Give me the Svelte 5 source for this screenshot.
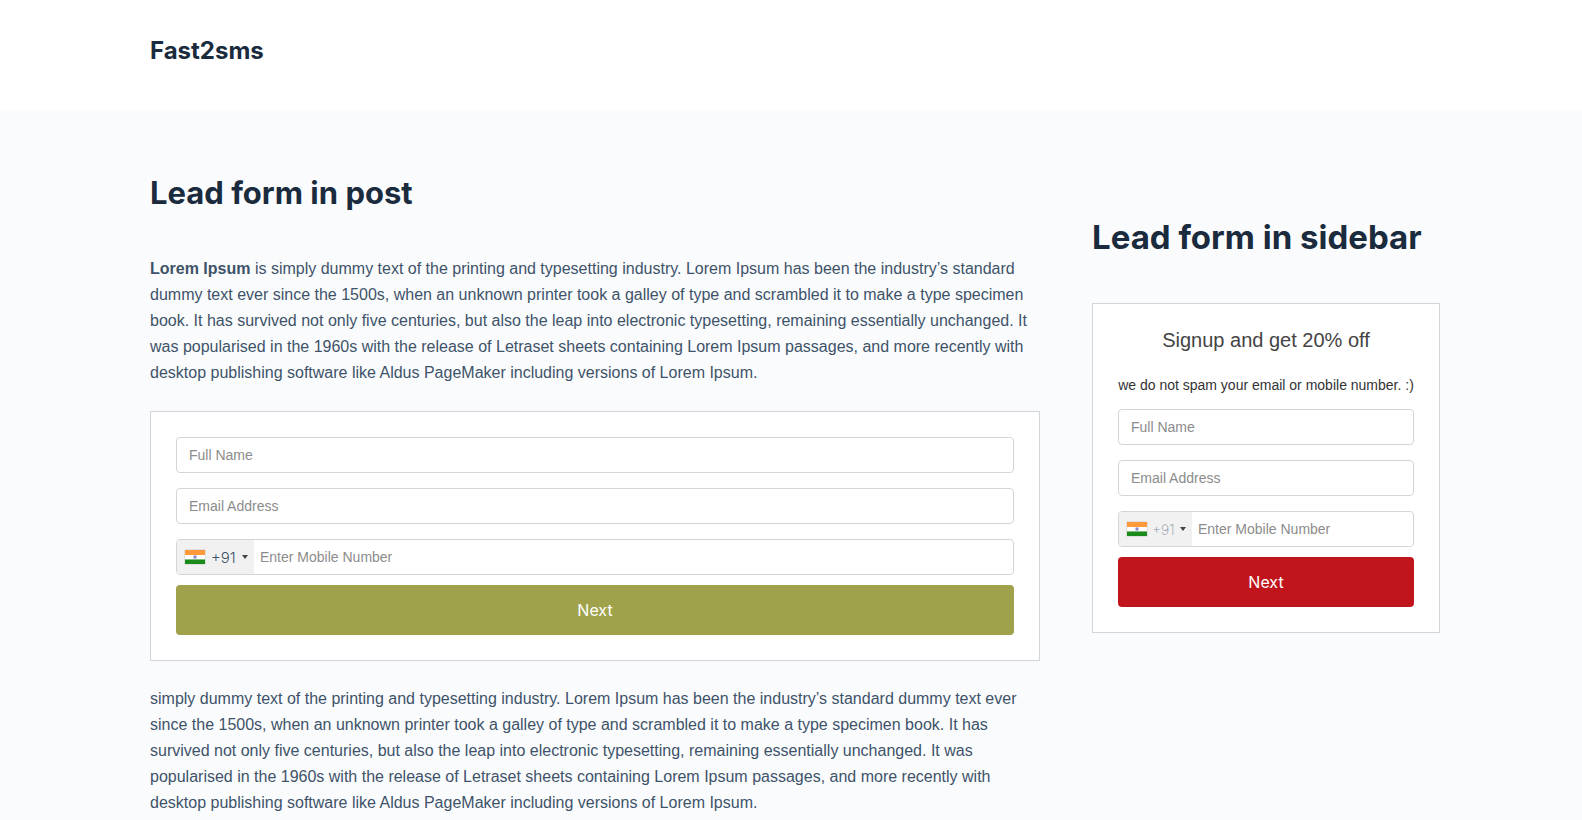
<script>
    let post = { name: '', email: '', code: '+91', mobile: '' };
    let sidebar = { name: '', email: '', code: '+91', mobile: '' };

    const codes = ['+91'];

    function submitLead(lead) {
        console.log('Lead submitted:', lead);
    }
</script>

<!-- Indian flag shown next to the dial code -->
{#snippet flag()}
    <svg class="flag" viewBox="0 0 20 14" width="20" height="14" aria-hidden="true">
        <rect width="20" height="14" fill="#ffffff" />
        <rect width="20" height="5" fill="#ff9a3c" />
        <rect y="9" width="20" height="1" fill="#7fbf80" />
        <rect y="10" width="20" height="4" fill="#1a8a1a" />
        <circle cx="10" cy="7" r="2" fill="#b5b5e2" />
        <circle cx="10" cy="7" r="1" fill="#7a7ac8" />
    </svg>
{/snippet}

{#snippet fields(id, lead)}
    <input class="field" type="text" id="{id}-name" aria-label="Full Name" placeholder="Full Name" bind:value={lead.name} />
    <input class="field" type="email" id="{id}-email" aria-label="Email Address" placeholder="Email Address" bind:value={lead.email} />
    <div class="phone">
        <label class="country" for="{id}-code">
            {@render flag()}
            <select id="{id}-code" aria-label="Country code" bind:value={lead.code}>
                {#each codes as code}
                    <option value={code}>{code}</option>
                {/each}
            </select>
            <svg class="caret" viewBox="0 0 6 4" width="6" height="4" aria-hidden="true">
                <path d="M0 0h6L3 4z" fill="#444444" />
            </svg>
        </label>
        <input class="mobile" type="tel" id="{id}-mobile" aria-label="Enter Mobile Number" placeholder="Enter Mobile Number" bind:value={lead.mobile} />
    </div>
    <button class="next" type="submit">Next</button>
{/snippet}

<header class="header">
    <a class="brand" href="/">Fast2sms</a>
</header>

<main class="page">
    <article class="post">
        <h1>Lead form in post</h1>
        <p><strong>Lorem Ipsum</strong> is simply dummy text of the printing and typesetting industry. Lorem Ipsum has been the industry’s standard dummy text ever since the 1500s, when an unknown printer took a galley of type and scrambled it to make a type specimen book. It has survived not only five centuries, but also the leap into electronic typesetting, remaining essentially unchanged. It was popularised in the 1960s with the release of Letraset sheets containing Lorem Ipsum passages, and more recently with desktop publishing software like Aldus PageMaker including versions of Lorem Ipsum.</p>
        <form class="lead" on:submit|preventDefault={() => submitLead(post)}>
            {@render fields('post', post)}
        </form>
        <p>simply dummy text of the printing and typesetting industry. Lorem Ipsum has been the industry’s standard dummy text ever since the 1500s, when an unknown printer took a galley of type and scrambled it to make a type specimen book. It has survived not only five centuries, but also the leap into electronic typesetting, remaining essentially unchanged. It was popularised in the 1960s with the release of Letraset sheets containing Lorem Ipsum passages, and more recently with desktop publishing software like Aldus PageMaker including versions of Lorem Ipsum.</p>
    </article>

    <aside class="sidebar">
        <h2>Lead form in sidebar</h2>
        <form class="lead red" on:submit|preventDefault={() => submitLead(sidebar)}>
            <h3>Signup and get 20% off</h3>
            <p class="note">we do not spam your email or mobile number. :)</p>
            {@render fields('sidebar', sidebar)}
        </form>
    </aside>
</main>

<style>
    :global(body) {
        margin: 0;
        background-color: #fafbfd;
        color: #3e5369;
        font-family: "Liberation Sans", Helvetica, Arial, sans-serif;
        font-size: 16px;
        line-height: 26px;
    }

    .header {
        box-sizing: border-box;
        height: 110px;
        padding: 36px 142px 0 150px;
        background-color: #ffffff;
    }

    .brand {
        color: #1a2b3d;
        font-family: Inter, sans-serif;
        font-size: 24px;
        font-weight: 700;
        line-height: 30px;
        text-decoration: none;
    }

    .page {
        display: grid;
        grid-template-columns: 890fr 348fr;
        gap: 52px;
        align-items: start;
        padding: 0 142px 0 150px;
    }

    .post, .sidebar {
        min-width: 0;
    }

    h1, h2 {
        margin: 0;
        color: #1a2b3d;
        font-family: Inter, sans-serif;
        font-weight: 700;
    }

    h1 {
        padding: 63px 0 43px;
        font-size: 31px;
        line-height: 40px;
    }

    h2 {
        padding: 107px 0 46px;
        font-size: 33px;
        line-height: 40px;
        white-space: nowrap;
    }

    p {
        margin: 0;
    }

    .lead {
        display: flex;
        flex-direction: column;
        padding: 25px;
        border: 1px solid #d2d6da;
        background-color: #ffffff;
    }

    .post .lead {
        margin: 25px 0;
    }

    h3 {
        margin: 0 0 24px;
        color: #444444;
        font-size: 20px;
        font-weight: 400;
        line-height: 22px;
        text-align: center;
    }

    .note {
        margin-bottom: 14px;
        color: #333333;
        font-size: 14px;
        line-height: 20px;
        text-align: center;
        white-space: nowrap;
    }

    .field, .phone {
        box-sizing: border-box;
        width: 100%;
        height: 36px;
        border: 1px solid #d2d6da;
        border-radius: 4px;
        background-color: #ffffff;
    }

    .field {
        margin-bottom: 15px;
        padding: 0 12px;
    }

    .field, .mobile {
        color: #444444;
        font-family: inherit;
        font-size: 14px;
    }

    .field::placeholder, .mobile::placeholder {
        color: #8c8c8c;
        opacity: 1;
    }

    .phone {
        display: flex;
        margin-bottom: 10px;
        overflow: hidden;
    }

    .country {
        display: flex;
        align-items: center;
        gap: 6px;
        padding: 0 6px 0 8px;
        background-color: #f1f1f1;
    }

    .flag {
        box-shadow: 0 0 1px #888888;
    }

    select {
        appearance: none;
        padding: 0;
        border: none;
        background: none;
        color: #3e5369;
        font-family: Inter, sans-serif;
        font-size: 15px;
        font-weight: 300;
    }

    .red .country {
        gap: 5px;
    }

    .red select {
        color: #8a98a6;
        font-size: 14px;
        font-weight: 200;
    }

    .mobile {
        flex: 1;
        min-width: 0;
        padding: 0 6px;
        border: none;
        background: none;
    }

    .next {
        height: 50px;
        border: none;
        border-radius: 4px;
        background-color: #9fa24b;
        color: #ffffff;
        font-family: Inter, sans-serif;
        font-size: 16px;
        font-weight: 400;
        cursor: pointer;
    }

    .red .next {
        background-color: #c1151d;
    }
</style>
